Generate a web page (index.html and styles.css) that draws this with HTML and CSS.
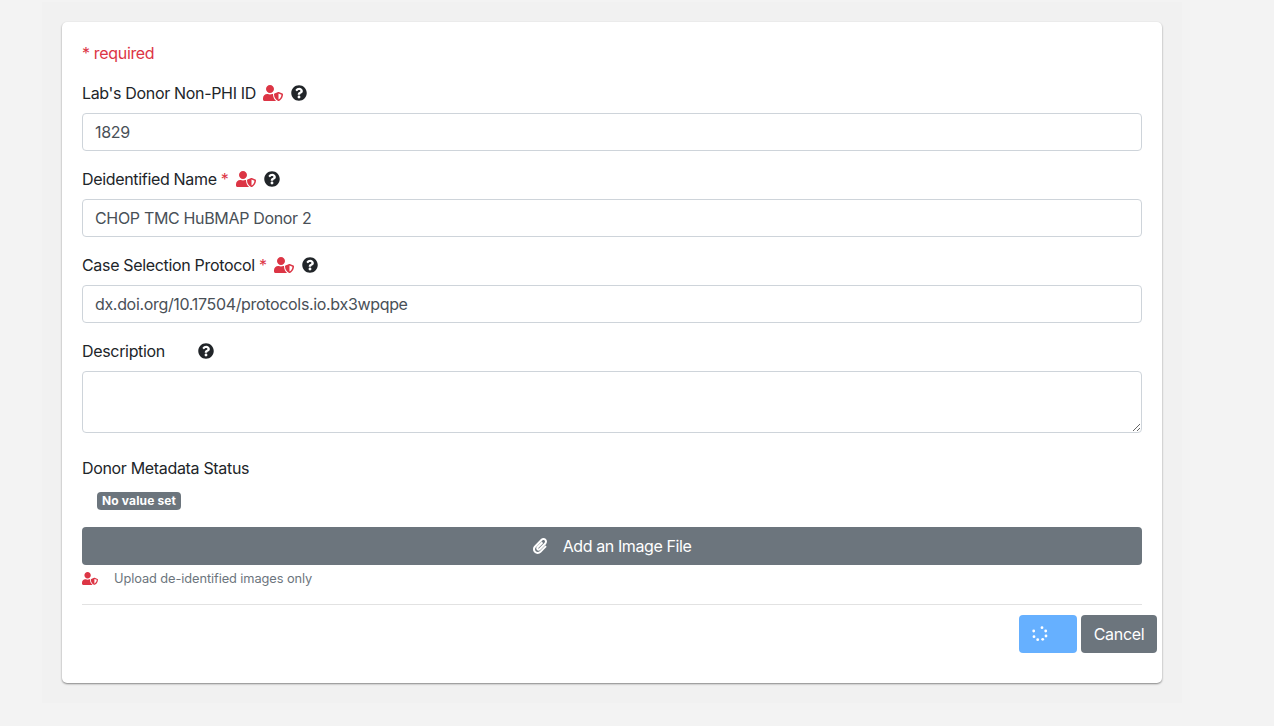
FILE: index.html
```html
<!DOCTYPE html>
<html lang="en">
<head>
    <meta charset="UTF-8">
    <meta name="viewport" content="width=device-width, initial-scale=1.0">
    <title>Donor</title>
    <link rel="stylesheet" href="styles.css">
</head>
<body>
    <svg class="icon-defs" aria-hidden="true">
        <symbol id="user-shield" viewBox="0 0 640 512">
            <path d="M622.3 271.1l-115.2-45c-4.1-1.6-12.6-3.7-22.2 0l-115.2 45c-10.7 4.2-17.7 14-17.7 24.9 0 111.6 68.7 188.8 132.9 213.9 9.6 3.7 18 1.6 22.2 0C558.4 489.9 640 420.5 640 296c0-10.9-7-20.7-17.7-24.9zM496 462.4V273.3l95.5 37.3c-5.6 87.1-60.9 135.4-95.5 151.8zM224 256c70.7 0 128-57.3 128-128S294.7 0 224 0 96 57.3 96 128s57.3 128 128 128zm96 40c0-2.5.8-4.8 1.1-7.2-2.5-.1-4.9-.8-7.5-.8h-16.7c-22.2 10.2-46.9 16-72.9 16s-50.6-5.8-72.9-16h-16.7C60.2 288 0 348.2 0 422.4V464c0 26.5 21.5 48 48 48h352c6.8 0 13.3-1.5 19.2-4-54-42.9-99.2-116.7-99.2-212z"/>
        </symbol>
        <symbol id="question-circle" viewBox="0 0 512 512">
            <path d="M504 256c0 136.997-111.043 248-248 248S8 392.997 8 256C8 119.083 119.043 8 256 8s248 111.083 248 248zM262.655 90c-54.497 0-89.255 22.957-116.549 63.758-3.536 5.286-2.353 12.415 2.715 16.258l34.699 26.31c5.205 3.947 12.621 3.008 16.665-2.122 17.864-22.658 30.113-35.797 57.303-35.797 20.429 0 45.698 13.148 45.698 32.958 0 14.976-12.363 22.667-32.534 33.976C247.128 238.528 216 254.941 216 296v4c0 6.627 5.373 12 12 12h56c6.627 0 12-5.373 12-12v-1.333c0-28.462 83.186-29.647 83.186-106.667 0-58.002-60.165-102-116.531-102zM256 338c-25.365 0-46 20.635-46 46 0 25.364 20.635 46 46 46s46-20.636 46-46c0-25.365-20.635-46-46-46z"/>
        </symbol>
    </svg>

    <div class="page-wrap">
        <form class="card">
            <p class="required-note">* required</p>

            <div class="form-group">
                <label class="field-label">Lab's Donor Non-PHI ID
                    <svg class="icon-shield"><use href="#user-shield"/></svg>
                    <svg class="icon-help"><use href="#question-circle"/></svg>
                </label>
                <input class="form-control" type="text" value="1829">
            </div>

            <div class="form-group">
                <label class="field-label">Deidentified Name <span class="req">*</span>
                    <svg class="icon-shield"><use href="#user-shield"/></svg>
                    <svg class="icon-help"><use href="#question-circle"/></svg>
                </label>
                <input class="form-control" type="text" value="CHOP TMC HuBMAP Donor 2">
            </div>

            <div class="form-group">
                <label class="field-label">Case Selection Protocol <span class="req">*</span>
                    <svg class="icon-shield"><use href="#user-shield"/></svg>
                    <svg class="icon-help"><use href="#question-circle"/></svg>
                </label>
                <input class="form-control" type="text" value="dx.doi.org/10.17504/protocols.io.bx3wpqpe">
            </div>

            <div class="form-group">
                <label class="field-label">Description
                    <svg class="icon-shield is-hidden"><use href="#user-shield"/></svg>
                    <svg class="icon-help"><use href="#question-circle"/></svg>
                </label>
                <textarea class="form-control text-area"></textarea>
            </div>

            <div class="status-group">
                <label class="field-label">Donor Metadata Status</label>
                <div class="status-line"><span class="badge">No value set</span></div>
            </div>

            <button type="button" class="btn btn-secondary btn-block">
                <svg class="icon-clip" viewBox="0 0 448 512"><path d="M43.246 466.142c-58.43-60.289-57.341-157.511 1.386-217.581L254.392 34c44.316-45.332 116.351-45.336 160.671 0 43.89 44.894 43.943 117.329 0 162.276L232.214 383.128c-29.855 30.537-78.633 30.111-107.982-.998-28.275-29.97-27.368-77.473 1.452-106.953l143.743-146.835c6.182-6.314 16.312-6.422 22.626-.241l22.861 22.379c6.315 6.182 6.422 16.312.241 22.626L171.427 319.927c-4.932 5.045-5.236 13.428-.648 18.292 4.372 4.634 11.245 4.711 15.688.165l182.849-186.851c19.613-20.062 19.613-52.725-.011-72.798-19.189-19.627-49.957-19.637-69.154 0L90.39 293.295c-34.763 35.56-35.299 93.12-1.191 128.313 34.01 35.093 88.985 35.137 123.058.286l172.06-175.999c6.177-6.319 16.307-6.433 22.626-.256l22.877 22.364c6.319 6.177 6.434 16.307.256 22.626l-172.06 175.998c-59.576 60.938-155.943 60.216-214.77-.485z"/></svg>
                Add an Image File
            </button>

            <div class="upload-note">
                <svg class="icon-shield-small"><use href="#user-shield"/></svg>
                <small>Upload de-identified images only</small>
            </div>

            <hr class="divider">

            <div class="actions">
                <button type="button" class="btn btn-primary" disabled>
                    <svg class="spinner" viewBox="0 0 16 16">
                        <circle cx="10" cy="1.7" r="1.4"/>
                        <circle cx="13.7" cy="5" r="1.4"/>
                        <circle cx="14" cy="10" r="1.4"/>
                        <circle cx="10.7" cy="13.3" r="1.4"/>
                        <circle cx="5.7" cy="13.7" r="1.4"/>
                        <circle cx="2" cy="10.7" r="1.4"/>
                        <circle cx="1.7" cy="5" r="1.4"/>
                    </svg>
                </button>
                <button type="button" class="btn btn-secondary btn-cancel">Cancel</button>
            </div>
        </form>
    </div>
</body>
</html>
```
FILE: styles.css
```css
* {
    box-sizing: border-box;
}
body {
    margin: 0;
    background-color: #f3f3f3;
    color: #212529;
    font-family: 'Inter', sans-serif;
    font-size: 16px;
    line-height: 24px;
    letter-spacing: -0.33px;
}
.icon-defs {
    display: none;
}
.page-wrap {
    width: 1140px;
    margin: 2px 0 0 42px;
    padding: 20px;
    background-color: #f1f1f1;
}
.card {
    height: 661px;
    padding: 20px;
    background-color: #fff;
    border-radius: 5px;
    box-shadow: 0 1px 2px rgba(0,0,0,0.45);
}
.required-note {
    margin: 0 0 17px;
    color: #dc3545;
    line-height: 22px;
}
.form-group {
    margin-bottom: 16px;
}
.field-label {
    display: block;
    margin-bottom: 8px;
}
.req {
    color: #dc3545;
}
.icon-shield {
    width: 20px;
    height: 16px;
    margin-left: 3px;
    vertical-align: -2px;
    fill: #dc3545;
}
.is-hidden {
    margin-left: 1px;
    visibility: hidden;
}
.icon-help {
    width: 16px;
    height: 16px;
    margin-left: 4px;
    vertical-align: -2px;
    fill: #212529;
}
.form-control {
    display: block;
    width: 100%;
    height: 38px;
    padding: 6px 12px;
    border: 1px solid #ced4da;
    border-radius: 4px;
    background-color: #fff;
    color: #495057;
    font-family: inherit;
    font-size: 16px;
    line-height: 24px;
    letter-spacing: -0.33px;
}
.text-area {
    height: 62px;
}
.status-group {
    margin-top: 23px;
}
.status-line {
    padding-left: 15px;
    height: 39px;
    line-height: 0;
    padding-top: 4px;
}
.badge {
    display: inline-block;
    height: 18px;
    padding: 0 5px;
    border-radius: 4px;
    background-color: #6c757d;
    color: #fff;
    font-size: 12px;
    font-weight: 700;
    line-height: 18px;
    letter-spacing: 0.15px;
}
.btn {
    height: 38px;
    padding: 0 12px;
    border: none;
    border-radius: 4px;
    color: #fff;
    font-family: inherit;
    font-size: 16px;
    line-height: 24px;
    letter-spacing: -0.33px;
}
.btn-secondary {
    background-color: #6c757d;
}
.btn-primary {
    background-color: #66b0ff;
}
.btn-block {
    display: block;
    width: 100%;
    letter-spacing: -0.4px;
}
.btn-cancel {
    width: 76px;
}
.icon-clip {
    width: 14px;
    height: 16px;
    margin-right: 12px;
    vertical-align: -2px;
    fill: #fff;
}
.upload-note {
    display: flex;
    align-items: center;
    height: 28px;
    color: #6c757d;
}
.upload-note small {
    margin-left: 16px;
    font-size: 12.8px;
    letter-spacing: -0.08px;
}
.icon-shield-small {
    width: 16px;
    height: 13px;
    margin-bottom: 2px;
    fill: #dc3545;
}
.divider {
    margin: 11px 0 10px;
    border: 0;
    border-top: 1px solid #e2e2e2;
}
.actions {
    display: flex;
    justify-content: flex-end;
    gap: 4px;
    margin-right: -15px;
}
.actions .btn-primary {
    width: 58px;
    padding-left: 13px;
    text-align: left;
}
.spinner {
    display: block;
    width: 16px;
    height: 16px;
    fill: #fff;
}
```
